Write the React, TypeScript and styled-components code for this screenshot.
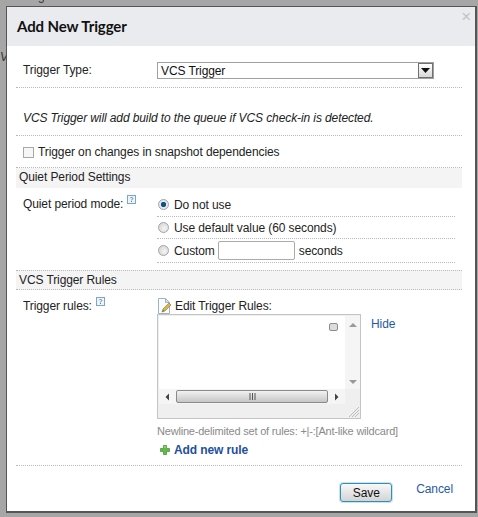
import styled, { createGlobalStyle } from 'styled-components';

const GlobalStyle = createGlobalStyle`
  html, body {
    margin: 0;
    padding: 0;
    background: #a6a6a6;
    overflow: hidden;
  }
  body {
    font-family: "Liberation Sans", Arial, sans-serif;
    font-size: 12px;
    letter-spacing: -0.1px;
    color: #222;
  }
`;

function HelpIcon() {
  return (
    <HelpMark>
      <svg width="9" height="9" viewBox="0 0 9 9">
        <rect x="0.5" y="0.5" width="8" height="8" fill="#eef5fa" stroke="#7ba8c9" />
        <path d="M3.2 3.2C3.4 2.2 5.8 2.2 5.8 3.5C5.8 4.4 4.5 4.3 4.5 5.4" fill="none" stroke="#5f7f98" />
        <rect x="4" y="6" width="1" height="1" fill="#5f7f98" />
      </svg>
    </HelpMark>
  );
}

function EditIcon() {
  return (
    <EditIconSvg width="14" height="16" viewBox="0 0 14 16">
      <path d="M0.5 0.5H7.5L11.5 4.5V15.5H0.5Z" fill="#fafcff" stroke="#9fb2c8" />
      <path d="M7.5 0.5V4.5H11.5Z" fill="#d5e2f0" stroke="#9fb2c8" />
      <path d="M4 14L5 11L11 5L13 7L7 13Z" fill="#e0b04a" stroke="#8c8a3c" strokeWidth="0.7" />
      <path d="M4 14L5 11.6L6.4 13Z" fill="#6e8f3a" />
    </EditIconSvg>
  );
}

function PlusIcon() {
  return (
    <svg width="10" height="10" viewBox="0 0 10 10">
      <path
        d="M3.5 0.5H6.5V3.5H9.5V6.5H6.5V9.5H3.5V6.5H0.5V3.5H3.5Z"
        fill="#63b84a"
        stroke="#4a9a38"
        strokeWidth="0.8"
        strokeLinejoin="round"
      />
      <path d="M4 1.4H6V2.6H4Z" fill="#b5e6a4" />
    </svg>
  );
}

function Triangle({ dir }: { dir: 'up' | 'down' | 'left' | 'right' }) {
  const vertical = dir === 'up' || dir === 'down';
  const points = {
    up: '0,5 8,5 4,1',
    down: '0,1 8,1 4,5',
    left: '6,0.5 6,7.5 2.5,4',
    right: '2,0.5 2,7.5 5.5,4',
  }[dir];
  return (
    <svg width="8" height={vertical ? 6 : 8} viewBox={vertical ? '0 0 8 6' : '0 0 8 8'}>
      <polygon points={points} fill={vertical ? '#9a9a9a' : '#444'} />
    </svg>
  );
}

export default function App() {
  return (
    <>
      <GlobalStyle />
      <PageScrapTop>g</PageScrapTop>
      <PageScrapLeft>V</PageScrapLeft>
      <Dialog>
        <Header>
          <Title>Add New Trigger</Title>
          <Close>×</Close>
        </Header>
        <Body>
          <TypeRow>
            <TypeLabel>Trigger Type:</TypeLabel>
            <SelectBox>
              <span>VCS Trigger</span>
              <SelectArrow>
                <svg width="9" height="5" viewBox="0 0 9 5">
                  <polygon points="0,0 9,0 4.5,5" fill="#111" />
                </svg>
              </SelectArrow>
            </SelectBox>
          </TypeRow>
          <NoteRow>VCS Trigger will add build to the queue if VCS check-in is detected.</NoteRow>
          <CheckRow>
            <CheckBox />
            <span>Trigger on changes in snapshot dependencies</span>
          </CheckRow>
          <SectionHeader>Quiet Period Settings</SectionHeader>
          <FieldRow>
            <FieldLabel>
              Quiet period mode:
              <HelpIcon />
            </FieldLabel>
            <RadioList>
              <RadioRow $height={29} $top={5}>
                <RadioDot $checked />
                <span>Do not use</span>
              </RadioRow>
              <RadioRow $height={22}>
                <RadioDot />
                <span>Use default value (60 seconds)</span>
              </RadioRow>
              <RadioRow $height={24}>
                <RadioDot />
                <span>Custom</span>
                <SecondsInput />
                <span>seconds</span>
              </RadioRow>
            </RadioList>
          </FieldRow>
          <SectionHeader $gap>VCS Trigger Rules</SectionHeader>
          <RulesRow>
            <FieldLabel>
              Trigger rules:
              <HelpIcon />
            </FieldLabel>
            <RulesColumn>
              <EditCaption>
                <EditIcon />
                <span>Edit Trigger Rules:</span>
              </EditCaption>
              <EditorLine>
                <Editor>
                  <EditorMain>
                    <EditorText>
                      <MiniCheck />
                    </EditorText>
                    <VerticalBar>
                      <Triangle dir="up" />
                      <Triangle dir="down" />
                    </VerticalBar>
                  </EditorMain>
                  <HorizontalBar>
                    <Triangle dir="left" />
                    <Thumb>
                      <svg width="7" height="7" viewBox="0 0 7 7">
                        <path d="M1 0V7M3.5 0V7M6 0V7" stroke="#555" />
                      </svg>
                    </Thumb>
                    <Triangle dir="right" />
                  </HorizontalBar>
                  <Grip>
                    <svg width="12" height="12" viewBox="0 0 12 12">
                      <path d="M11 1L1 11M11 4L4 11M11 7L7 11" stroke="#bcbcbc" fill="none" />
                    </svg>
                  </Grip>
                </Editor>
                <HideLink>Hide</HideLink>
              </EditorLine>
              <Hint>Newline-delimited set of rules: +|-:[Ant-like wildcard]</Hint>
              <AddRule>
                <PlusIcon />
                <span>Add new rule</span>
              </AddRule>
            </RulesColumn>
          </RulesRow>
          <Footer>
            <SaveButton type="button">Save</SaveButton>
            <CancelLink>Cancel</CancelLink>
          </Footer>
        </Body>
      </Dialog>
    </>
  );
}

const PageScrapTop = styled.div`
  position: absolute;
  left: 38px;
  top: -11px;
  color: #333;
`;

const PageScrapLeft = styled.div`
  position: absolute;
  left: 0;
  top: 50px;
  font-style: italic;
  color: #333;
`;

const Dialog = styled.div`
  position: relative;
  box-sizing: border-box;
  width: 471px;
  height: 507px;
  margin: 6px 0 0 6px;
  background: #fff;
  border: 1px solid #555;
  border-right-width: 2px;
  border-bottom-width: 2px;
`;

const Header = styled.div`
  position: relative;
  height: 39px;
  background: #e9ebee;
  display: flex;
  align-items: center;
  padding-left: 10px;
`;

const Title = styled.div`
  font-family: Lato, "Liberation Sans", sans-serif;
  font-weight: 700;
  font-size: 15px;
  color: #111;
  margin-top: -1px;
`;

const Close = styled.div`
  position: absolute;
  right: 4px;
  top: 1px;
  font-size: 17px;
  line-height: 17px;
  color: #c4c4c4;
`;

const Body = styled.div`
  padding: 0 13px 0 9px;
`;

const TypeRow = styled.div`
  height: 42px;
  box-sizing: border-box;
  padding-top: 16px;
  display: flex;
  align-items: flex-start;
  border-bottom: 1px dotted #bbb;
`;

const TypeLabel = styled.div`
  width: 141px;
  padding-left: 7px;
  box-sizing: border-box;
  line-height: 17px;
`;

const SelectBox = styled.div`
  box-sizing: border-box;
  width: 277px;
  height: 17px;
  border: 1px solid #a0a0a0;
  display: flex;
  align-items: center;
  justify-content: space-between;
  padding-left: 3px;
  color: #111;
`;

const SelectArrow = styled.div`
  box-sizing: border-box;
  width: 15px;
  height: 15px;
  background: linear-gradient(#fff, #d8d8d8);
  border: 1px solid #707070;
  display: flex;
  align-items: center;
  justify-content: center;
`;

const NoteRow = styled.div`
  box-sizing: border-box;
  height: 48px;
  padding: 22px 0 0 7px;
  font-style: italic;
  line-height: 16px;
  border-bottom: 1px dotted #bbb;
`;

const CheckRow = styled.div`
  box-sizing: border-box;
  height: 32px;
  display: flex;
  align-items: center;
  gap: 4px;
  padding-left: 7px;
  border-bottom: 1px dotted #bbb;
`;

const CheckBox = styled.span`
  box-sizing: border-box;
  width: 11px;
  height: 11px;
  margin-top: 2px;
  background: #f6f6f6;
  border: 1px solid #a8a8a8;
`;

const SectionHeader = styled.div<{ $gap?: boolean }>`
  box-sizing: border-box;
  height: 20px;
  margin-top: ${(p) => (p.$gap ? '7px' : '0')};
  padding-left: 3px;
  background: #f4f4f4;
  line-height: 18px;
  border-top: ${(p) => (p.$gap ? '1px dotted #bbb' : 'none')};
  border-bottom: ${(p) => (p.$gap ? '1px dotted #bbb' : 'none')};
`;

const FieldRow = styled.div`
  display: flex;
`;

const FieldLabel = styled.div`
  box-sizing: border-box;
  width: 141px;
  padding: 8px 0 0 7px;
  line-height: 16px;
`;

const HelpMark = styled.span`
  display: inline-block;
  position: relative;
  top: -4px;
  margin-left: 4px;
  line-height: 0;
`;

const RadioList = styled.div`
  flex: 1;
  margin-right: 7px;
`;

const RadioRow = styled.div<{ $height: number; $top?: number }>`
  box-sizing: border-box;
  height: ${(p) => p.$height}px;
  display: flex;
  align-items: center;
  gap: 5px;
  padding-left: 1px;
  padding-top: ${(p) => p.$top ?? 0}px;
  border-bottom: 1px dotted #bbb;
`;

const RadioDot = styled.span<{ $checked?: boolean }>`
  box-sizing: border-box;
  width: 11px;
  height: 11px;
  border-radius: 50%;
  border: 1px solid #a4a4a4;
  background: ${(p) =>
    p.$checked
      ? 'radial-gradient(circle, #17507e 0 2.2px, #dfe8ef 3px)'
      : 'radial-gradient(circle at 60% 60%, #f4f4f4, #cfcfcf)'};
`;

const SecondsInput = styled.span`
  box-sizing: border-box;
  width: 77px;
  height: 19px;
  margin: 0 -1px 0 -2px;
  background: #fff;
  border: 1px solid #ababab;
  border-radius: 2px;
`;

const RulesRow = styled.div`
  display: flex;
  border-bottom: 1px dotted #bbb;
  height: 176px;
  box-sizing: border-box;
`;

const RulesColumn = styled.div`
  padding-top: 7px;
`;

const EditCaption = styled.div`
  display: flex;
  align-items: center;
  gap: 3px;
  height: 17px;
  padding-left: 1px;
`;

const EditIconSvg = styled.svg`
  flex-shrink: 0;
`;

const EditorLine = styled.div`
  display: flex;
  align-items: flex-start;
`;

const Editor = styled.div`
  position: relative;
  box-sizing: border-box;
  width: 204px;
  height: 105px;
  background: #efefef;
  border: 1px solid #c4c4c4;
  padding: 1px 0 0 1px;
`;

const EditorMain = styled.div`
  display: flex;
  height: 73px;
`;

const EditorText = styled.div`
  width: 186px;
  position: relative;
  background: #fff;
`;

const MiniCheck = styled.span`
  position: absolute;
  right: 7px;
  top: 7px;
  box-sizing: border-box;
  width: 9px;
  height: 8px;
  background: #dcdcdc;
  border: 1px solid #8c8c8c;
  border-radius: 2px;
`;

const VerticalBar = styled.div`
  width: 15px;
  display: flex;
  flex-direction: column;
  justify-content: space-between;
  align-items: center;
  padding: 6px 0 4px;
  box-sizing: border-box;
  background: #f5f5f5;
`;

const HorizontalBar = styled.div`
  display: flex;
  align-items: center;
  gap: 5px;
  height: 15px;
  width: 186px;
  padding: 0 4px;
  box-sizing: border-box;
  background: #f5f5f5;
`;

const Thumb = styled.div`
  box-sizing: border-box;
  flex: 1;
  height: 13px;
  display: flex;
  align-items: center;
  justify-content: center;
  background: linear-gradient(#f2f2f2, #c6c6c6);
  border: 1px solid #8a8a8a;
  border-radius: 2px;
`;

const Grip = styled.div`
  position: absolute;
  right: 0;
  bottom: 0;
  line-height: 0;
`;

const HideLink = styled.a`
  margin: 3px 0 0 10px;
  color: #1f5aa8;
`;

const Hint = styled.div`
  margin-top: 6px;
  font-size: 11px;
  letter-spacing: -0.2px;
  line-height: 13px;
  color: #8a8a8a;
`;

const AddRule = styled.a`
  display: flex;
  align-items: center;
  gap: 4px;
  margin: 5px 0 0 3px;
  font-weight: 700;
  color: #1f4fa0;
`;

const Footer = styled.div`
  display: flex;
  justify-content: flex-end;
  align-items: flex-start;
  padding-top: 17px;
`;

const SaveButton = styled.button`
  box-sizing: border-box;
  width: 52px;
  height: 19px;
  padding: 0;
  font-family: inherit;
  font-size: 12px;
  letter-spacing: inherit;
  color: #111;
  background: linear-gradient(#f8f8f8, #d4d4d4);
  border: 1px solid #2f8fb5;
  border-radius: 3px;
  box-shadow: 0 0 0 1px rgba(47, 143, 181, 0.25);
`;

const CancelLink = styled.a`
  margin: -1px 9px 0 24px;
  color: #1f5aa8;
`;
